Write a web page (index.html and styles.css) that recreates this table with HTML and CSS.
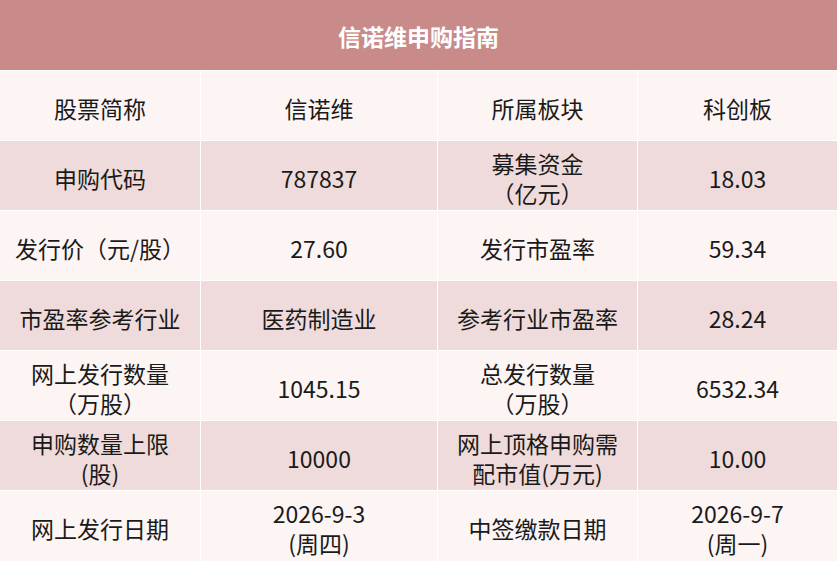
FILE: index.html
```html
<!DOCTYPE html>
<html lang="zh-CN">
<head>
<meta charset="utf-8">
<link rel="stylesheet" href="styles.css">
</head>
<body>
<div class="sheet">
  <div class="title">信诺维申购指南</div>

  <div class="cell light">股票简称</div>
  <div class="cell light">信诺维</div>
  <div class="cell light">所属板块</div>
  <div class="cell light">科创板</div>

  <div class="cell dark">申购代码</div>
  <div class="cell dark">787837</div>
  <div class="cell dark">募集资金<br>（亿元）</div>
  <div class="cell dark">18.03</div>

  <div class="cell light">发行价（元/股）</div>
  <div class="cell light">27.60</div>
  <div class="cell light">发行市盈率</div>
  <div class="cell light">59.34</div>

  <div class="cell dark">市盈率参考行业</div>
  <div class="cell dark">医药制造业</div>
  <div class="cell dark">参考行业市盈率</div>
  <div class="cell dark">28.24</div>

  <div class="cell light">网上发行数量<br>（万股）</div>
  <div class="cell light">1045.15</div>
  <div class="cell light">总发行数量<br>（万股）</div>
  <div class="cell light">6532.34</div>

  <div class="cell dark">申购数量上限<br>(股)</div>
  <div class="cell dark">10000</div>
  <div class="cell dark">网上顶格申购需<br>配市值(万元)</div>
  <div class="cell dark">10.00</div>

  <div class="cell light">网上发行日期</div>
  <div class="cell light">2026-9-3<br>(周四)</div>
  <div class="cell light">中签缴款日期</div>
  <div class="cell light">2026-9-7<br>(周一)</div>
</div>
</body>
</html>
```

FILE: styles.css
```css
html, body {
  margin: 0;
  padding: 0;
  background: #ffffff;
}

.sheet {
  width: 837px;
  height: 561px;
  display: grid;
  grid-template-columns: 200px 236px 199px 199px;
  grid-template-rows: 70px repeat(6, 69px) 70px;
  gap: 1px;
  background: #ffffff;
  font-family: "Noto Sans CJK SC", "Noto Sans", sans-serif;
  font-size: 23px;
  color: #1a1a1a;
}

.title {
  grid-column: 1 / -1;
  background: #c88b89;
  color: #ffffff;
  font-weight: 700;
  font-size: 23px;
  display: flex;
  align-items: center;
  justify-content: center;
  padding-top: 2px;
}

.cell {
  display: flex;
  align-items: center;
  justify-content: center;
  text-align: center;
  line-height: 30px;
  padding-top: 4px;
  white-space: nowrap;
}

.light {
  background: #fdf4f4;
}

.dark {
  background: #efdbdb;
}
```
